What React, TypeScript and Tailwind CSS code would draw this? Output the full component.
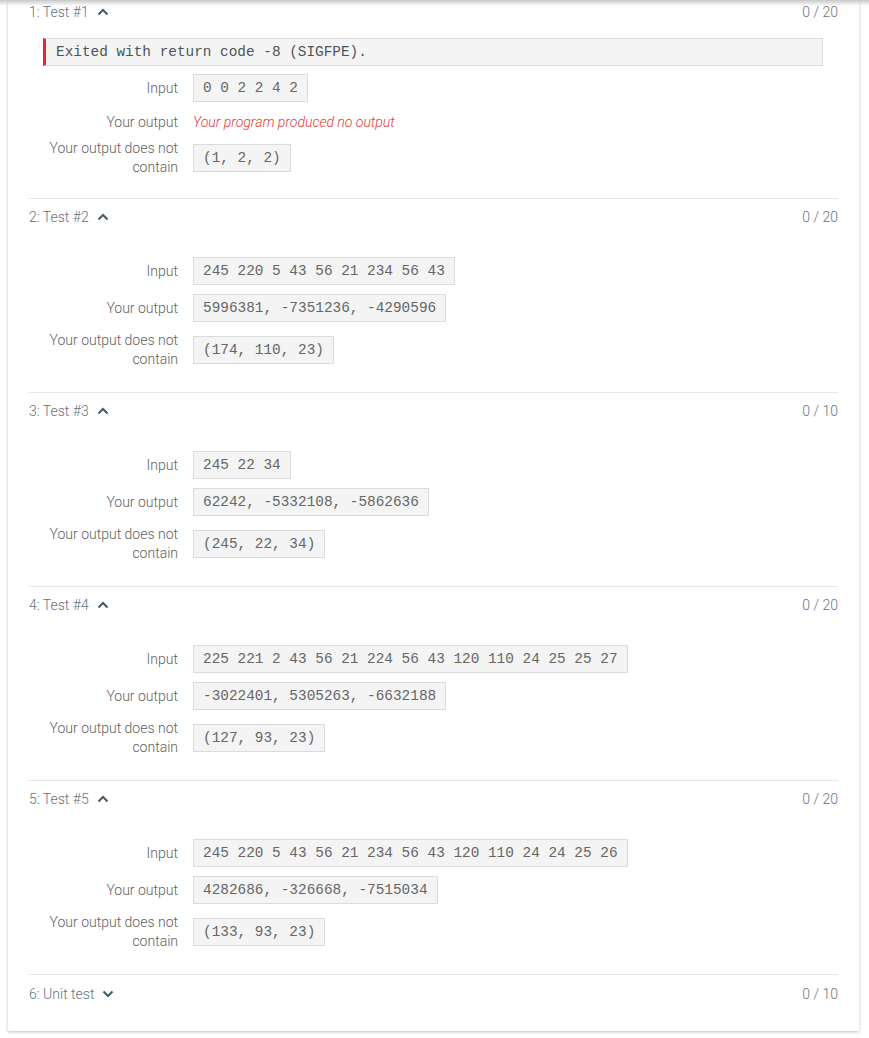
import React from "react";

type TestCase = {
    title: string;
    score: string;
    error?: string;
    input: string;
    output: string | null;
    missing: string;
};

const tests: TestCase[] = [
    {
        title: "1: Test #1",
        score: "0 / 20",
        error: "Exited with return code -8 (SIGFPE).",
        input: "0 0 2 2 4 2",
        output: null,
        missing: "(1, 2, 2)",
    },
    {
        title: "2: Test #2",
        score: "0 / 20",
        input: "245 220 5 43 56 21 234 56 43",
        output: "5996381, -7351236, -4290596",
        missing: "(174, 110, 23)",
    },
    {
        title: "3: Test #3",
        score: "0 / 10",
        input: "245 22 34",
        output: "62242, -5332108, -5862636",
        missing: "(245, 22, 34)",
    },
    {
        title: "4: Test #4",
        score: "0 / 20",
        input: "225 221 2 43 56 21 224 56 43 120 110 24 25 25 27",
        output: "-3022401, 5305263, -6632188",
        missing: "(127, 93, 23)",
    },
    {
        title: "5: Test #5",
        score: "0 / 20",
        input: "245 220 5 43 56 21 234 56 43 120 110 24 24 25 26",
        output: "4282686, -326668, -7515034",
        missing: "(133, 93, 23)",
    },
];

const Chevron = ({ up }: { up: boolean }) => (
    <svg width="12" height="8" viewBox="0 0 12 8" className="ml-[8px]">
        <polyline
            points={up ? "1.5,6.5 6,2 10.5,6.5" : "1.5,1.5 6,6 10.5,1.5"}
            fill="none"
            stroke="#455a64"
            strokeWidth="2"
        />
    </svg>
);

const Header = ({ title, score, up }: { title: string; score: string; up: boolean }) => (
    <div className="flex flex-row items-center justify-between h-[20px] text-[14px] leading-5 text-[#63727d]">
        <div className="flex flex-row items-center">
            <span>{title}</span>
            <Chevron up={up} />
        </div>
        <div className="text-[#6b747a]">{score}</div>
    </div>
);

const Code = ({ children }: { children: string }) => (
    <div className="border border-[#dcdcdc] bg-[#f4f4f4] px-[9px] py-[5px] leading-[16px] text-[14.4px] text-[#666] whitespace-pre font-['Liberation_Mono',monospace]">
        {children}
    </div>
);

const Row = ({ label, children, className }: { label: string; children: React.ReactNode; className?: string }) => (
    <div className={"flex flex-row items-center gap-[15px] " + (className ?? "")}>
        <div className="w-[149px] shrink-0 text-right text-[14px] leading-[19px] text-[#616161]">{label}</div>
        <div>{children}</div>
    </div>
);

const TestSection = ({ test, first }: { test: TestCase; first: boolean }) => (
    <div className={first ? "pt-[2px] pb-[21px]" : "border-t border-[#e8e8e8] pt-[8px] pb-[23px]"}>
        <Header title={test.title} score={test.score} up={true} />
        {test.error ? (
            <div className="mt-[16px] ml-[14px] mr-[15px] mb-[8px] border border-[#dcdcdc] border-l-[3px] border-l-[#e0282e] bg-[#f4f4f4] pl-[10px] py-[5px] leading-[16px] text-[14.4px] text-[#4a5656] whitespace-pre font-['Liberation_Mono',monospace]">
                {test.error}
            </div>
        ) : (
            <div className="h-[30px]" />
        )}
        <div className="flex flex-col gap-[9px]">
            <Row label="Input">
                <Code>{test.input}</Code>
            </Row>
            {test.output === null ? (
                <Row label="Your output" className="-mt-[1px] -mb-[4px]">
                    <span className="italic text-[14px] leading-5 text-[#e53935]">Your program produced no output</span>
                </Row>
            ) : (
                <Row label="Your output">
                    <Code>{test.output}</Code>
                </Row>
            )}
            <Row label="Your output does not contain">
                <Code>{test.missing}</Code>
            </Row>
        </div>
    </div>
);

const App = () => {
    return (
        <div className="relative min-h-[1038px] bg-white font-['Roboto',sans-serif] font-light">
            {/* shadow of the app bar above */}
            <div className="absolute left-0 right-0 top-0 h-[6px] bg-gradient-to-b from-[#c8c8c8] to-transparent" />
            <div className="ml-[8px] mr-[10px] bg-white px-[21px] pb-[8px] shadow-[0_1px_3px_rgba(0,0,0,0.25)]">
                {tests.map((test, i) => (
                    <TestSection key={test.title} test={test} first={i === 0} />
                ))}
                <div className="border-t border-[#e8e8e8] pt-[9px] pb-[19px]">
                    <Header title="6: Unit test" score="0 / 10" up={false} />
                </div>
            </div>
        </div>
    );
};

export default App;
